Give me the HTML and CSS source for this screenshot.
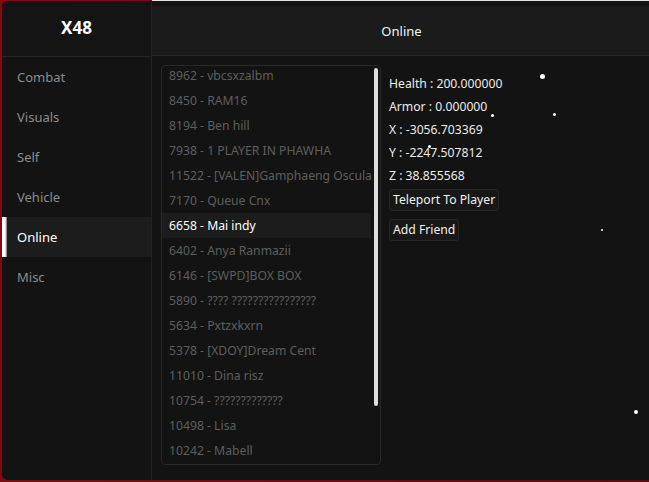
FILE: index.html
```html
<!DOCTYPE html>
<html>
<head>
<meta charset="utf-8">
<link rel="stylesheet" href="styles.css">
</head>
<body>
<div class="window">
  <aside class="sidebar">
    <div class="brand">X48</div>
    <nav class="nav">
      <div class="nav-item">Combat</div>
      <div class="nav-item">Visuals</div>
      <div class="nav-item">Self</div>
      <div class="nav-item">Vehicle</div>
      <div class="nav-item active">Online</div>
      <div class="nav-item">Misc</div>
    </nav>
  </aside>
  <main class="main">
    <header class="main-header">Online</header>
    <section class="content">
      <div class="player-box">
        <div class="player-list">
          <div class="player first">8962 - vbcsxzalbm</div>
          <div class="player">8450 - RAM16</div>
          <div class="player">8194 - Ben hill</div>
          <div class="player">7938 - 1 PLAYER IN PHAWHA</div>
          <div class="player">11522 - [VALEN]Gamphaeng Oscula</div>
          <div class="player">7170 - Queue Cnx</div>
          <div class="player selected">6658 - Mai indy</div>
          <div class="player">6402 - Anya Ranmazii</div>
          <div class="player">6146 - [SWPD]BOX BOX</div>
          <div class="player">5890 - ???? ????????????????</div>
          <div class="player">5634 - Pxtzxkxrn</div>
          <div class="player">5378 - [XDOY]Dream Cent</div>
          <div class="player">11010 - Dina risz</div>
          <div class="player">10754 - ?????????????</div>
          <div class="player">10498 - Lisa</div>
          <div class="player">10242 - Mabell</div>
        </div>
        <div class="scrollbar"></div>
      </div>
      <div class="details">
        <div class="stat">Health : 200.000000</div>
        <div class="stat">Armor : 0.000000</div>
        <div class="stat">X : -3056.703369</div>
        <div class="stat">Y : -2247.507812</div>
        <div class="stat">Z : 38.855568</div>
        <button class="btn first-btn">Teleport To Player</button>
        <button class="btn">Add Friend</button>
      </div>
      <span class="dot d1"></span>
      <span class="dot d2"></span>
      <span class="dot d3"></span>
      <span class="dot d4"></span>
      <span class="dot d5"></span>
      <span class="dot d6"></span>
    </section>
  </main>
</div>
</body>
</html>
```

FILE: styles.css
```css
html, body {
  margin: 0;
  padding: 0;
  width: 649px;
  height: 482px;
  overflow: hidden;
}
body {
  background:
    linear-gradient(#f0f0f0, #9a9a9a 60%, #3a3a3a) 152px 0 / 100% 6px no-repeat,
    linear-gradient(to right, #7c0c14, #5a0a10) 0 0 / 100% 100% no-repeat;
  background-color: #6a0b12;
  font-family: "Noto Sans", "Open Sans", sans-serif;
  font-size: 12px;
}
.window {
  margin: 1px 0 0 2px;
  height: 479px;
  display: grid;
  grid-template-columns: 150px 1fr;
  border-radius: 6px 0 0 6px;
  overflow: hidden;
  background: #131313;
}
.sidebar {
  background: #131313;
  border-right: 1px solid #222222;
  display: flex;
  flex-direction: column;
}
.brand {
  border-bottom: 1px solid #252525;
  display: flex;
  align-items: center;
  justify-content: center;
  color: #ffffff;
  font-weight: 700;
  font-size: 17px;
  padding-bottom: 2px;
  box-sizing: border-box;
  height: 56px;
  background: #141414;
}
.nav {
  display: flex;
  flex-direction: column;
}
.nav-item {
  height: 40px;
  display: flex;
  align-items: center;
  padding-left: 15px;
  color: #8c8c8c;
  font-size: 13px;
  position: relative;
}
.nav-item.active {
  background: #1c1c1c;
  color: #ffffff;
}
.nav-item.active::before {
  content: "";
  position: absolute;
  left: 0;
  top: 0;
  bottom: 0;
  width: 5px;
  background: linear-gradient(to right, #ffffff 60%, #6a6a6a);
}
.main {
  display: flex;
  flex-direction: column;
  background: #131313;
  margin-top: 5px;
}
.main-header {
  height: 50px;
  box-sizing: border-box;
  background: #1b1b1b;
  border-bottom: 1px solid #262626;
  display: flex;
  align-items: center;
  justify-content: center;
  color: #f0f0f0;
  font-size: 13px;
  padding-left: 2px;
}
.content {
  position: relative;
  flex: 1;
  display: flex;
  padding: 9px 0 0 9px;
  gap: 8px;
}
.player-box {
  position: relative;
  width: 220px;
  height: 400px;
  box-sizing: border-box;
  border: 1px solid #292929;
  border-radius: 4px;
  overflow: hidden;
}
.player-list {
  padding-right: 9px;
  margin-top: -3px;
}
.player {
  height: 25px;
  line-height: 25px;
  padding-left: 7px;
  color: #5e5e5e;
  font-size: 12.2px;
  white-space: nowrap;
}
.player.selected {
  background: #1c1c1c;
  color: #ffffff;
}
.scrollbar {
  position: absolute;
  right: 2px;
  top: 2px;
  width: 4px;
  height: 338px;
  border-radius: 2px;
  background: #dedede;
}
.details {
  display: flex;
  flex-direction: column;
  align-items: flex-start;
  padding-top: 7px;
}
.stat {
  height: 23px;
  line-height: 23px;
  color: #ececec;
  font-size: 12.2px;
  white-space: nowrap;
}
.btn {
  font-family: inherit;
  font-size: 12.2px;
  color: #f0f0f0;
  background: #181818;
  border: 1px solid #262626;
  border-radius: 3px;
  height: 22px;
  padding: 0 3px;
  margin-top: 8px;
  line-height: 20px;
}
.btn.first-btn {
  margin-top: 2px;
}
.dot {
  position: absolute;
  background: #ffffff;
  border-radius: 50%;
}
.d1 { left: 388px; top: 18px; width: 5px; height: 5px; }
.d2 { left: 339px; top: 58px; width: 3px; height: 3px; }
.d3 { left: 401px; top: 57px; width: 3px; height: 3px; }
.d4 { left: 276px; top: 89px; width: 3px; height: 3px; }
.d5 { left: 449px; top: 173px; width: 2px; height: 2px; }
.d6 { left: 482px; top: 354px; width: 4px; height: 4px; }
```
